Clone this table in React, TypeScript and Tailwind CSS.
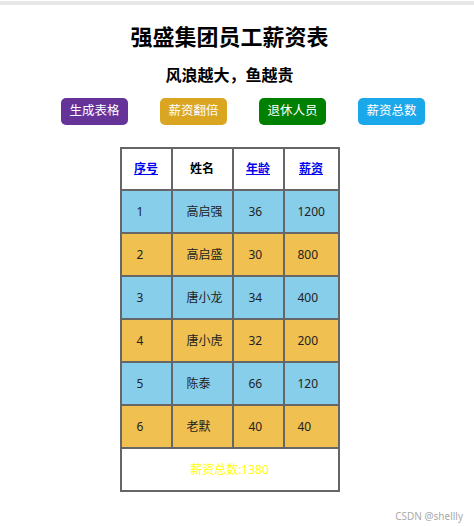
import React from "react";

const rows = [
  { id: 1, name: "高启强", age: 36, salary: 1200 },
  { id: 2, name: "高启盛", age: 30, salary: 800 },
  { id: 3, name: "唐小龙", age: 34, salary: 400 },
  { id: 4, name: "唐小虎", age: 32, salary: 200 },
  { id: 5, name: "陈泰", age: 66, salary: 120 },
  { id: 6, name: "老默", age: 40, salary: 40 },
];

export default function App() {
  return (
    <div
      className="relative w-[474px] h-[526px] bg-white overflow-hidden"
      style={{ fontFamily: '"Noto Sans", "Noto Sans CJK SC", sans-serif' }}
    >
      <div className="mt-[1px] h-[4px] w-full bg-[#e6e6e6]" />
      <div className="w-[459px]">
        <h1 className="mt-[16px] text-center text-[22px] leading-[30px] font-bold text-black">
          强盛集团员工薪资表
        </h1>
        <h2 className="mt-[12px] text-center text-[16px] leading-[25px] font-bold text-black">
          风浪越大，鱼越贵
        </h2>
        <div className="mt-[10px] flex gap-[32px] pl-[61px]">
          <button className="w-[67px] h-[27px] rounded-[5px] bg-[#663399] text-white text-[12.5px]">
            生成表格
          </button>
          <button className="w-[67px] h-[27px] rounded-[5px] bg-[#daa520] text-white text-[12.5px]">
            薪资翻倍
          </button>
          <button className="w-[67px] h-[27px] rounded-[5px] bg-[#008000] text-white text-[12.5px]">
            退休人员
          </button>
          <button className="w-[67px] h-[27px] rounded-[5px] bg-[#1ba8ea] text-white text-[12.5px]">
            薪资总数
          </button>
        </div>
        <table className="mt-[22px] mx-auto border-collapse border-2 border-[#666] text-[12px] text-[#222] table-fixed w-[218px]">
          <colgroup>
            <col className="w-[51px]" />
            <col className="w-[61px]" />
            <col className="w-[51px]" />
            <col className="w-[55px]" />
          </colgroup>
          <thead>
            <tr className="h-[42px] bg-white">
              <th className="border-2 border-[#666] font-bold text-center">
                <span className="text-[#0000ee] underline">序号</span>
              </th>
              <th className="border-2 border-[#666] font-bold text-center text-black">姓名</th>
              <th className="border-2 border-[#666] font-bold text-center">
                <span className="text-[#0000ee] underline">年龄</span>
              </th>
              <th className="border-2 border-[#666] font-bold text-center">
                <span className="text-[#0000ee] underline">薪资</span>
              </th>
            </tr>
          </thead>
          <tbody>
            {rows.map((r, i) => (
              <tr
                key={r.id}
                className={i % 2 === 0 ? "h-[43px] bg-[#87ceeb]" : "h-[43px] bg-[#f0c050]"}
              >
                <td className="border-2 border-[#666] pl-[15px] text-left">{r.id}</td>
                <td className="border-2 border-[#666] pl-[14px] text-left">{r.name}</td>
                <td className="border-2 border-[#666] pl-[15px] text-left">{r.age}</td>
                <td className="border-2 border-[#666] pl-[13px] text-left">{r.salary}</td>
              </tr>
            ))}
            <tr className="h-[43px] bg-white">
              <td colSpan={4} className="border-2 border-[#666] text-center text-[#ffff00]">
                薪资总数:1380
              </td>
            </tr>
          </tbody>
        </table>
      </div>
      <div className="absolute right-[11px] bottom-[4px] text-[10px] leading-[12px] text-[#aaaaaa]">
        CSDN @shellly
      </div>
    </div>
  );
}
